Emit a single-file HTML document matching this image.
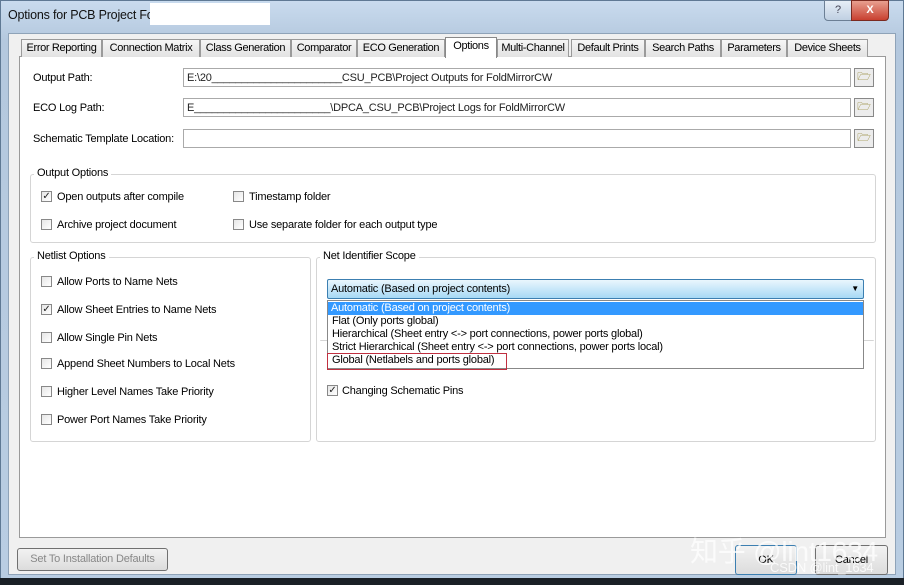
<!DOCTYPE html>
<html><head><style>
body{margin:0;width:904px;height:585px;overflow:hidden;background:#9fb5cc;font-family:"Liberation Sans",sans-serif;font-size:11px;letter-spacing:-0.2px;color:#000;position:relative}
.a{position:absolute;white-space:nowrap}
.win{left:0;top:0;width:902px;height:578px;background:linear-gradient(#c9dbee,#b4c8de 40px,#b9cde2);border:1px solid #5f7994}
.body{left:8px;top:33px;width:886px;height:540px;background:#f0f0f0;border:1px solid #8fa3b8}
.tab{top:39px;height:17px;border:1px solid #9a9a9a;border-bottom:none;background:linear-gradient(#f6f6f6,#e2e2e2);line-height:17px;text-align:center;overflow:hidden;letter-spacing:-0.35px}
.panel{left:19px;top:56px;width:865px;height:480px;background:#fff;border:1px solid #9a9a9a}
.inp{height:19px;border:1px solid #aaa;background:#fff;line-height:19px;padding-left:3px;color:#222;box-sizing:border-box}
.btn{width:20px;height:19px;border:1px solid #888;background:#ececec;box-sizing:border-box;text-align:center;line-height:17px;font-size:11px;color:#7a6a00}
.grp{border:1px solid #d5d5d5;border-radius:3px}
.lg{background:#fff;padding:0 3px}
.cb{width:11px;height:11px;border:1px solid #888;background:linear-gradient(135deg,#e6e6e6,#fff);box-sizing:border-box;font-size:10px;line-height:9px;text-align:center;color:#222}
.b2{border:1px solid #707070;border-radius:3px;background:linear-gradient(#f2f2f2,#dcdcdc);text-align:center;box-sizing:border-box}
</style></head><body>
<div class="a win"></div>
<div class="a" style="left:8px;top:8px;font-size:12.5px;color:#111">Options for PCB Project FoldMirrors.PrjPcb</div>
<div class="a" style="left:150px;top:3px;width:120px;height:22px;background:#fff"></div>
<div class="a" style="left:824px;top:0;width:26px;height:19px;border:1px solid #6c7f95;border-radius:0 0 0 4px;background:linear-gradient(#e6eef7,#c0d0e2);text-align:center;color:#445;line-height:19px">?</div>
<div class="a" style="left:851px;top:0;width:36px;height:19px;border:1px solid #7a2a20;border-radius:0 0 4px 0;background:linear-gradient(#e8a090,#c84030);text-align:center;color:#fff;font-weight:bold;line-height:19px">X</div>
<div class="a body"></div>
<div class="a panel"></div>
<div class="a tab" style="left:21px;width:79px">Error Reporting</div>
<div class="a tab" style="left:102px;width:96px">Connection Matrix</div>
<div class="a tab" style="left:200px;width:89px">Class Generation</div>
<div class="a tab" style="left:291px;width:64px">Comparator</div>
<div class="a tab" style="left:357px;width:86px">ECO Generation</div>
<div class="a tab" style="left:445px;top:37px;height:20px;width:50px;background:#fff;border-color:#888">Options</div>
<div class="a tab" style="left:497px;width:70px">Multi-Channel</div>
<div class="a tab" style="left:571px;width:72px">Default Prints</div>
<div class="a tab" style="left:645px;width:74px">Search Paths</div>
<div class="a tab" style="left:721px;width:64px">Parameters</div>
<div class="a tab" style="left:787px;width:79px">Device Sheets</div>

<div class="a" style="left:33px;top:72px">Output Path:</div>
<div class="a inp" style="left:183px;top:68px;width:668px">E:\20______________________CSU_PCB\Project Outputs for FoldMirrorCW</div>
<div class="a btn" style="left:854px;top:68px">&#128449;</div>
<div class="a" style="left:33px;top:102px">ECO Log Path:</div>
<div class="a inp" style="left:183px;top:98px;width:668px">E_______________________\DPCA_CSU_PCB\Project Logs for FoldMirrorCW</div>
<div class="a btn" style="left:854px;top:98px">&#128449;</div>
<div class="a" style="left:33px;top:133px">Schematic Template Location:</div>
<div class="a inp" style="left:183px;top:129px;width:668px"></div>
<div class="a btn" style="left:854px;top:129px">&#128449;</div>

<div class="a grp" style="left:30px;top:174px;width:844px;height:67px"></div>
<div class="a lg" style="left:34px;top:167px">Output Options</div>
<div class="a cb" style="left:41px;top:191px">✓</div><div class="a" style="left:57px;top:191px">Open outputs after compile</div>
<div class="a cb" style="left:233px;top:191px"></div><div class="a" style="left:249px;top:191px">Timestamp folder</div>
<div class="a cb" style="left:41px;top:219px"></div><div class="a" style="left:57px;top:219px">Archive project document</div>
<div class="a cb" style="left:233px;top:219px"></div><div class="a" style="left:249px;top:219px">Use separate folder for each output type</div>

<div class="a grp" style="left:30px;top:257px;width:279px;height:183px"></div>
<div class="a lg" style="left:34px;top:250px">Netlist Options</div>
<div class="a cb" style="left:41px;top:276px"></div><div class="a" style="left:57px;top:276px">Allow Ports to Name Nets</div>
<div class="a cb" style="left:41px;top:304px">✓</div><div class="a" style="left:57px;top:304px">Allow Sheet Entries to Name Nets</div>
<div class="a cb" style="left:41px;top:332px"></div><div class="a" style="left:57px;top:332px">Allow Single Pin Nets</div>
<div class="a cb" style="left:41px;top:358px"></div><div class="a" style="left:57px;top:358px">Append Sheet Numbers to Local Nets</div>
<div class="a cb" style="left:41px;top:386px"></div><div class="a" style="left:57px;top:386px">Higher Level Names Take Priority</div>
<div class="a cb" style="left:41px;top:414px"></div><div class="a" style="left:57px;top:414px">Power Port Names Take Priority</div>

<div class="a grp" style="left:316px;top:257px;width:558px;height:183px"></div>
<div class="a lg" style="left:320px;top:250px">Net Identifier Scope</div>
<div class="a grp" style="left:320px;top:340px;width:554px;height:1px;border-width:1px 0 0 0"></div>
<div class="a" style="left:327px;top:279px;width:537px;height:20px;box-sizing:border-box;border:1px solid #3c7fb1;border-radius:2px;background:linear-gradient(#eaf6fd,#a7d9f5);line-height:18px;padding-left:3px">Automatic (Based on project contents)<span style="position:absolute;right:4px;top:0;font-size:8px">▼</span></div>
<div class="a" style="left:327px;top:300px;width:537px;height:69px;box-sizing:border-box;border:1px solid #888;background:#fff;line-height:13px;padding-top:1px">
<div style="background:#3399ff;color:#fff;padding-left:3px">Automatic (Based on project contents)</div>
<div style="padding-left:4px">Flat (Only ports global)</div>
<div style="padding-left:4px">Hierarchical (Sheet entry &lt;-&gt; port connections, power ports global)</div>
<div style="padding-left:4px">Strict Hierarchical (Sheet entry &lt;-&gt; port connections, power ports local)</div>
<div style="padding-left:4px">Global (Netlabels and ports global)</div>
</div>
<div class="a" style="left:327px;top:353px;width:178px;height:15px;border:1px solid #c03040"></div>
<div class="a cb" style="left:327px;top:385px">✓</div><div class="a" style="left:342px;top:385px">Changing Schematic Pins</div>

<div class="a b2" style="left:17px;top:548px;width:151px;height:23px;line-height:21px;color:#888">Set To Installation Defaults</div>
<div class="a b2" style="left:735px;top:545px;width:62px;height:30px;line-height:28px;border-color:#3c7fb1">OK</div>
<div class="a b2" style="left:815px;top:545px;width:73px;height:30px;line-height:28px">Cancel</div>
<div class="a" style="left:690px;top:530px;font-size:28px;color:rgba(255,255,255,.75);font-family:'Liberation Sans','Noto Sans CJK SC',sans-serif">知乎 @lint1634</div>
<div class="a" style="left:770px;top:560px;font-size:13px;color:rgba(255,255,255,.8)">CSDN @lint_1634</div>
<div class="a" style="left:0;top:578px;width:904px;height:7px;background:#1a2026"></div>
</body></html>
